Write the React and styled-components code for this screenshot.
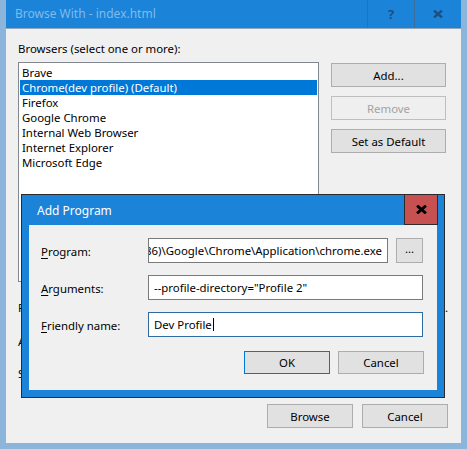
import React from "react";
import styled, { createGlobalStyle } from "styled-components";

const GlobalStyle = createGlobalStyle`
  html, body {
    margin: 0;
    padding: 0;
    background: #8cb5db;
  }
  body {
    font-family: "Noto Sans", "Segoe UI", sans-serif;
    font-size: 11.4px;
    color: #000;
  }
  * {
    box-sizing: border-box;
  }
`;

const browsers = [
  "Brave",
  "Chrome(dev profile) (Default)",
  "Firefox",
  "Google Chrome",
  "Internal Web Browser",
  "Internet Explorer",
  "Microsoft Edge",
];

const CloseGlyph = ({ color, size = 10, weight = 2.4 }) => (
  <svg width={size} height={size - 2} viewBox="0 0 10 8">
    <path d="M1 0.5 L9 7.5 M9 0.5 L1 7.5" stroke={color} strokeWidth={weight} />
  </svg>
);

const App = () => {
  return (
    <>
      <GlobalStyle />
      <Window>
        <TitleBar>
          <Title>Browse With - index.html</Title>
          <CaptionButton>?</CaptionButton>
          <CaptionButton>
            <CloseGlyph color="#1d4f80" />
          </CaptionButton>
        </TitleBar>

        <Client>
          <Text>Browsers (select one or more):</Text>
          <Body>
            <ListBox>
              {browsers.map((name) => (
                <ListItem key={name} $selected={name.startsWith("Chrome(")}>
                  {name}
                </ListItem>
              ))}
            </ListBox>
            <ButtonColumn>
              <Button $wide>Add...</Button>
              <Button $wide disabled>
                Remove
              </Button>
              <Button $wide>Set as Default</Button>
            </ButtonColumn>
          </Body>

          <Note $top={18} $justify>
            Press Set as Default to use the selected browser for this file type.
          </Note>
          <Note $top={19}>Also open the selected browsers when debugging</Note>
          <Note $top={17}>Size of browser window: Default</Note>

          <Footer>
            <Button>Browse</Button>
            <Button>Cancel</Button>
          </Footer>
        </Client>

        <Dialog>
          <DialogTitleBar>
            <DialogTitle>Add Program</DialogTitle>
            <DialogClose>
              <CloseGlyph color="#000" size={11} weight={2.6} />
            </DialogClose>
          </DialogTitleBar>

          <DialogClient>
            <Form>
              <FieldLabel>
                <u>P</u>rogram:
              </FieldLabel>
              <PathRow>
                <TextBox $scrolled>
                  <span>C:\Program Files (x86)\Google\Chrome\Application\chrome.exe</span>
                </TextBox>
                <SmallButton>...</SmallButton>
              </PathRow>

              <FieldLabel>
                <u>A</u>rguments:
              </FieldLabel>
              <TextBox>--profile-directory="Profile 2"</TextBox>

              <FieldLabel>
                <u>F</u>riendly name:
              </FieldLabel>
              <TextBox $focused>
                Dev Profile
                <Caret />
              </TextBox>
            </Form>

            <DialogFooter>
              <Button $default>OK</Button>
              <Button>Cancel</Button>
            </DialogFooter>
          </DialogClient>
        </Dialog>
      </Window>
    </>
  );
};

const Window = styled.div`
  position: relative;
  width: 467px;
  height: 449px;
  padding: 0 6px 6px;
  background: #8cb5db;
  display: flex;
  flex-direction: column;
`;

const TitleBar = styled.div`
  height: 29px;
  background: #1b83d8;
  border-bottom: 1px solid #93a7bb;
  display: flex;
  align-items: stretch;
`;

const Title = styled.div`
  flex: 1;
  display: flex;
  align-items: center;
  padding-left: 9px;
  padding-bottom: 1px;
  font-size: 12px;
  color: #80bbec;
`;

const CaptionButton = styled.div`
  width: 47px;
  border-left: 1px solid #3a6d9a;
  display: flex;
  align-items: center;
  justify-content: center;
  color: #1d4f80;
  font-weight: 700;
  font-size: 13px;
  padding-bottom: 1px;
`;

const Client = styled.div`
  flex: 1;
  background: #f0f0f0;
  padding: 12px 13px 0 12px;
  display: flex;
  flex-direction: column;
`;

const Text = styled.div`
  line-height: 15px;
  white-space: nowrap;
`;

const Body = styled.div`
  display: flex;
  gap: 12px;
  margin-top: 6px;
`;

const ListBox = styled.div`
  width: 301px;
  height: 220px;
  background: #fff;
  border: 1px solid #828790;
  padding: 2px 1px;
`;

const ListItem = styled.div`
  height: 15px;
  line-height: 15px;
  padding-left: 2px;
  white-space: nowrap;
  background: ${(p) => (p.$selected ? "#0078d7" : "transparent")};
  color: ${(p) => (p.$selected ? "#fff" : "#000")};
`;

const ButtonColumn = styled.div`
  display: flex;
  flex-direction: column;
  gap: 9px;
  margin-top: 1px;
`;

const Button = styled.button`
  width: ${(p) => (p.$wide ? "115px" : "86px")};
  height: 24px;
  padding: 0;
  font: inherit;
  color: #000;
  background: #e1e1e1;
  border: 1px solid ${(p) => (p.$default ? "#0078d7" : "#adadad")};

  &:disabled {
    color: #a3a3a3;
    background: #efefef;
    border-color: #bfbfbf;
  }
`;

const Note = styled.div`
  margin-top: ${(p) => p.$top}px;
  line-height: 15px;
  text-align: ${(p) => (p.$justify ? "justify" : "left")};
  text-align-last: ${(p) => (p.$justify ? "justify" : "auto")};
`;

const Footer = styled.div`
  display: flex;
  justify-content: flex-end;
  gap: 9px;
  margin-top: 23px;
`;

const Dialog = styled.div`
  position: absolute;
  left: 21px;
  top: 194px;
  width: 424px;
  height: 204px;
  border: 1px solid #2b2b2b;
  background: #1b83d8;
  padding: 0 7px 7px;
  display: flex;
  flex-direction: column;
`;

const DialogTitleBar = styled.div`
  height: 30px;
  display: flex;
  align-items: flex-start;
`;

const DialogTitle = styled.div`
  flex: 1;
  height: 30px;
  display: flex;
  align-items: center;
  padding-left: 8px;
  font-size: 12px;
  color: #fff;
`;

const DialogClose = styled.div`
  width: 34px;
  height: 31px;
  margin: -1px -1px 0 0;
  background: #c75050;
  border: 1px solid #2b2b2b;
  display: flex;
  align-items: center;
  justify-content: center;
`;

const DialogClient = styled.div`
  flex: 1;
  background: #f0f0f0;
  padding: 13px 14px 0 12px;
  display: flex;
  flex-direction: column;
`;

const Form = styled.div`
  display: grid;
  grid-template-columns: 107px minmax(0, 1fr);
  grid-auto-rows: 25px;
  row-gap: 12px;
`;

const FieldLabel = styled.div`
  display: flex;
  align-items: center;
  padding-top: 2px;

  u {
    text-decoration-thickness: 1px;
    text-underline-offset: 2px;
  }
`;

const PathRow = styled.div`
  min-width: 0;
  display: flex;
  gap: 8px;
`;

const TextBox = styled.div`
  flex: 1;
  min-width: 0;
  display: flex;
  align-items: center;
  justify-content: ${(p) => (p.$scrolled ? "flex-end" : "flex-start")};
  overflow: hidden;
  white-space: nowrap;
  background: #fff;
  border: 1px solid ${(p) => (p.$focused ? "#2f6aa0" : "#7a7a7a")};
  padding: 0 5px 0 5px;

  span {
    flex-shrink: 0;
  }
`;

const Caret = styled.span`
  width: 1px;
  height: 13px;
  background: #000;
  margin-left: 1px;
`;

const SmallButton = styled.button`
  width: 27px;
  flex-shrink: 0;
  padding: 0 0 4px;
  font: inherit;
  background: #e1e1e1;
  border: 1px solid #adadad;
`;

const DialogFooter = styled.div`
  display: flex;
  justify-content: flex-end;
  gap: 8px;
  margin: 14px -1px 0 0;

  button {
    height: 23px;
  }
`;

export default App;
